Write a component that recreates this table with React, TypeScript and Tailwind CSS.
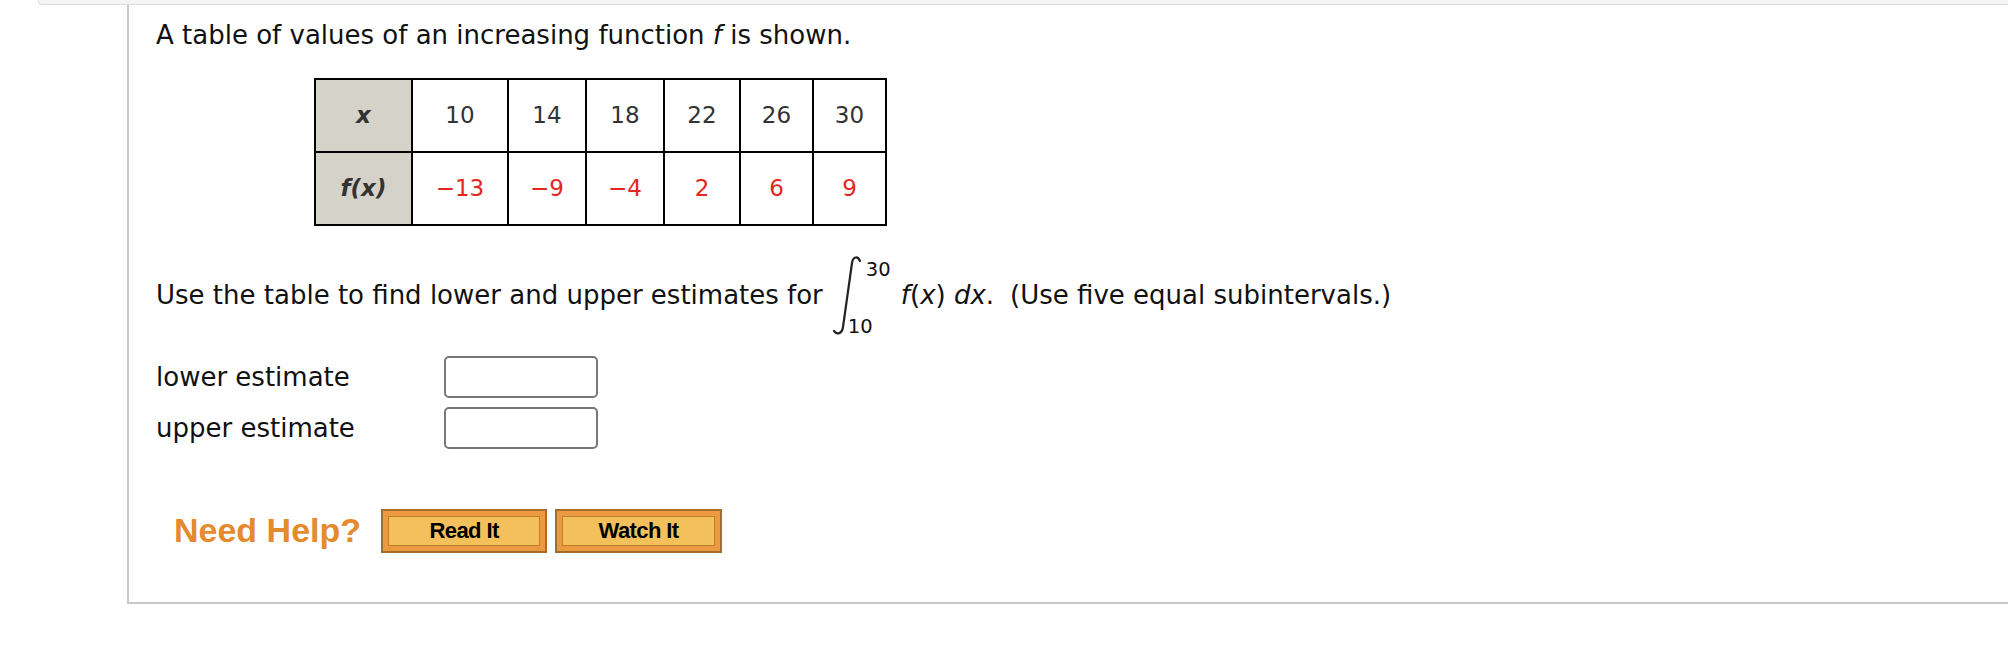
const columns = [
  { x: "10", fx: "\u221213", w: "w-[96px]" },
  { x: "14", fx: "\u22129", w: "w-[78px]" },
  { x: "18", fx: "\u22124", w: "w-[78px]" },
  { x: "22", fx: "2", w: "w-[76px]" },
  { x: "26", fx: "6", w: "w-[73px]" },
  { x: "30", fx: "9", w: "w-[73px]" },
]

const HelpButton = ({ label, w }: { label: string; w: string }) => (
  <button
    className={`${w} h-[44px] border-2 border-[#a56b2a] bg-[#eb9a3f] p-[5px] flex`}
  >
    <span className="flex-1 flex items-center justify-center border-[1.5px] border-[#bd7d32] bg-[#f3c05c] font-['Liberation_Sans',Arial,sans-serif] font-bold text-[22px] text-black tracking-[-0.6px]">
      {label}
    </span>
  </button>
)

const Integral = () => (
  <span className="relative inline-block w-[66px] h-[82px] mx-[6px]">
    <svg
      className="absolute left-0 top-0"
      width="34"
      height="82"
      viewBox="0 0 34 82"
    >
      <path
        d="M31 7 C29 2, 24 2, 23 9 L14 73 C13 80, 8 81, 5 77"
        fill="none"
        stroke="#222"
        strokeWidth="2.2"
        strokeLinecap="round"
      />
    </svg>
    <span className="absolute left-[37px] top-[4px] text-[19.5px] leading-[24px]">30</span>
    <span className="absolute left-[19px] top-[61px] text-[19.5px] leading-[24px]">10</span>
  </span>
)

export default function App() {
  return (
    <div className="w-[2008px] h-[662px] bg-white font-['DejaVu_Sans',Verdana,sans-serif] text-[#111] overflow-hidden">
      <div className="ml-[38px] h-[5px] bg-[#f4f4f4] border-b border-l border-[#dcdcdc] rounded-bl-[4px]" />
      <div className="ml-[127px] border-l-2 border-b-2 border-[#c8c8c8] pl-[27px] pt-[14px] pb-[46px]">
        <p className="text-[26px] leading-[32px]">
          A table of values of an increasing function <i>f</i> is shown.
        </p>

        <table className="mt-[27px] ml-[158px] border-collapse border-2 border-black text-[23px] text-[#333]">
          <tbody>
            <tr className="h-[73px]">
              <td className="w-[97px] border-2 border-black bg-[#d5d2c9] text-center font-bold italic">
                x
              </td>
              {columns.map((c) => (
                <td key={c.x} className={`${c.w} border-2 border-black text-center`}>
                  {c.x}
                </td>
              ))}
            </tr>
            <tr className="h-[73px]">
              <td className="border-2 border-black bg-[#d5d2c9] text-center font-bold italic">
                f(x)
              </td>
              {columns.map((c) => (
                <td key={c.x} className="border-2 border-black text-center text-[#e5261f]">
                  {c.fx}
                </td>
              ))}
            </tr>
          </tbody>
        </table>

        <div className="mt-[28px] flex items-center text-[26px] leading-[32px]">
          <span>Use the table to find lower and upper estimates for</span>
          <Integral />
          <span>
            <i>f</i>(<i>x</i>) <i>dx</i>.
          </span>
          <span className="ml-[16px]">(Use five equal subintervals.)</span>
        </div>

        <div className="mt-[20px] flex flex-col gap-[9px] text-[26px]">
          {["lower estimate", "upper estimate"].map((label) => (
            <div key={label} className="flex items-center">
              <span className="w-[288px]">{label}</span>
              <input
                type="text"
                className="w-[154px] h-[42px] border-2 border-[#777] rounded-[5px] bg-white"
              />
            </div>
          ))}
        </div>

        <div className="mt-[56px] flex items-center">
          <span className="ml-[18px] mr-[20px] font-['Liberation_Sans',Arial,sans-serif] font-bold text-[34px] text-[#e68a2e]">
            Need Help?
          </span>
          <HelpButton label="Read It" w="w-[166px]" />
          <span className="w-[8px]" />
          <HelpButton label="Watch It" w="w-[167px]" />
        </div>
      </div>
    </div>
  )
}
